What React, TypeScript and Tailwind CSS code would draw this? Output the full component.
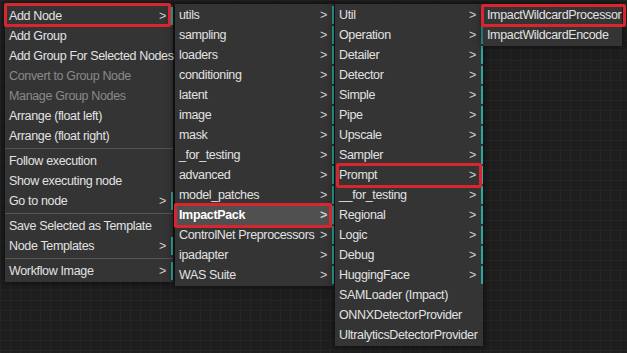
import React from "react";

type Entry =
  | { kind: "item"; label: string; sub?: boolean; disabled?: boolean; active?: boolean }
  | { kind: "sep" };

const item = (label: string, opts: { sub?: boolean; disabled?: boolean; active?: boolean } = {}): Entry => ({
  kind: "item",
  label,
  ...opts,
});
const sep: Entry = { kind: "sep" };

const MAIN: Entry[] = [
  item("Add Node", { sub: true }),
  item("Add Group"),
  item("Add Group For Selected Nodes"),
  item("Convert to Group Node", { disabled: true }),
  item("Manage Group Nodes", { disabled: true }),
  item("Arrange (float left)"),
  item("Arrange (float right)"),
  sep,
  item("Follow execution"),
  item("Show executing node"),
  item("Go to node", { sub: true }),
  sep,
  item("Save Selected as Template"),
  item("Node Templates", { sub: true }),
  sep,
  item("Workflow Image", { sub: true }),
];

const CATEGORIES: Entry[] = [
  "utils",
  "sampling",
  "loaders",
  "conditioning",
  "latent",
  "image",
  "mask",
  "_for_testing",
  "advanced",
  "model_patches",
].map((l) => item(l, { sub: true }));
CATEGORIES.push(
  item("ImpactPack", { sub: true, active: true }),
  item("ControlNet Preprocessors", { sub: true }),
  item("ipadapter", { sub: true }),
  item("WAS Suite", { sub: true })
);

const IMPACT: Entry[] = [
  "Util",
  "Operation",
  "Detailer",
  "Detector",
  "Simple",
  "Pipe",
  "Upscale",
  "Sampler",
  "Prompt",
  "__for_testing",
  "Regional",
  "Logic",
  "Debug",
  "HuggingFace",
].map((l) => item(l, { sub: true }));
IMPACT.push(item("SAMLoader (Impact)"), item("ONNXDetectorProvider"), item("UltralyticsDetectorProvider"));

const PROMPT: Entry[] = [item("ImpactWildcardProcessor"), item("ImpactWildcardEncode")];

function Menu({ entries, className }: { entries: Entry[]; className: string }) {
  return (
    <div className={`absolute flex flex-col bg-[#343434] py-px shadow-[0_0_8px_rgba(0,0,0,0.7)] ${className}`}>
      {entries.map((e, i) =>
        e.kind === "sep" ? (
          <div key={i} className="my-[2px] h-px bg-[#555]" />
        ) : (
          <div
            key={i}
            className={`flex h-5 items-center pl-1 text-[12.5px] leading-none tracking-[-0.35px] ${
              e.disabled ? "text-[#8a8a8a]" : "text-[#e2e2e2]"
            } ${e.active ? "bg-[#505050] font-bold text-white" : ""}`}
          >
            <span className="flex-1 whitespace-nowrap">{e.label}</span>
            {e.sub && (
              <>
                <span className="mr-[5px] text-[#cfcfcf]">&gt;</span>
                <span className="h-[18px] w-[2px] bg-[#2fa7a0]" />
              </>
            )}
          </div>
        )
      )}
    </div>
  );
}

export default function App() {
  return (
    <div
      className="relative h-[353px] w-[627px] overflow-hidden bg-[#1e1e1e] bg-[linear-gradient(#252525_1px,transparent_1px),linear-gradient(90deg,#252525_1px,transparent_1px)] bg-[size:10px_10px]"
      style={{ fontFamily: '"Liberation Sans", Arial, sans-serif' }}
    >
      <Menu entries={MAIN} className="left-[5px] top-[5px] w-[168px]" />
      <Menu entries={CATEGORIES} className="left-[175px] top-[4px] w-[159px]" />
      <Menu entries={IMPACT} className="left-[335px] top-[4px] w-[148px]" />
      <Menu entries={PROMPT} className="left-[483px] top-[4px] w-[139px]" />

      {/* red highlight annotations */}
      <div className="pointer-events-none absolute left-[4px] top-[3px] h-[24px] w-[167px] rounded-[2px] border-[3px] border-[#d8262f]" />
      <div className="pointer-events-none absolute left-[174px] top-[203px] h-[25px] w-[158px] rounded-[2px] border-[3px] border-[#d8262f]" />
      <div className="pointer-events-none absolute left-[336px] top-[163px] h-[25px] w-[146px] rounded-[2px] border-[3px] border-[#d8262f]" />
      <div className="pointer-events-none absolute left-[481px] top-[4px] h-[23px] w-[145px] rounded-[2px] border-[3px] border-[#d8262f]" />
    </div>
  );
}
